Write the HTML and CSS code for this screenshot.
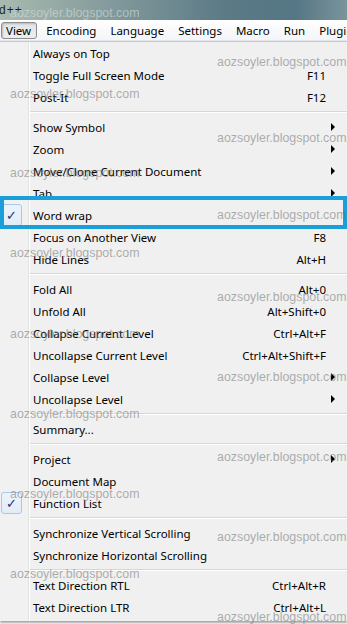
FILE: index.html
```html
<!DOCTYPE html>
<html lang="en">
<head>
  <meta charset="UTF-8">
  <meta name="viewport" content="width=device-width, initial-scale=1.0">
  <title>View menu</title>
  <link rel="stylesheet" href="styles.css">
</head>
<body>
  <div class="titlebar"><span class="appname">d++</span></div>

  <div class="menubar">
    <span class="mitem open">View</span>
    <span class="mitem">Encoding</span>
    <span class="mitem">Language</span>
    <span class="mitem">Settings</span>
    <span class="mitem">Macro</span>
    <span class="mitem">Run</span>
    <span class="mitem">Plugins</span>
  </div>

  <div class="menu">
    <div class="row"><span class="gut"></span><span class="lbl">Always on Top</span><span class="key"></span><span class="sub"></span></div>
    <div class="row"><span class="gut"></span><span class="lbl">Toggle Full Screen Mode</span><span class="key">F11</span><span class="sub"></span></div>
    <div class="row"><span class="gut"></span><span class="lbl">Post-It</span><span class="key">F12</span><span class="sub"></span></div>
    <div class="sep"></div>
    <div class="row"><span class="gut"></span><span class="lbl">Show Symbol</span><span class="key"></span><span class="sub"><i class="arrow"></i></span></div>
    <div class="row"><span class="gut"></span><span class="lbl">Zoom</span><span class="key"></span><span class="sub"><i class="arrow"></i></span></div>
    <div class="row"><span class="gut"></span><span class="lbl">Move/Clone Current Document</span><span class="key"></span><span class="sub"><i class="arrow"></i></span></div>
    <div class="row"><span class="gut"></span><span class="lbl">Tab</span><span class="key"></span><span class="sub"><i class="arrow"></i></span></div>
    <div class="row"><span class="gut"><b class="check">&#10003;</b></span><span class="lbl">Word wrap</span><span class="key"></span><span class="sub"></span></div>
    <div class="row"><span class="gut"></span><span class="lbl">Focus on Another View</span><span class="key">F8</span><span class="sub"></span></div>
    <div class="row"><span class="gut"></span><span class="lbl">Hide Lines</span><span class="key">Alt+H</span><span class="sub"></span></div>
    <div class="sep"></div>
    <div class="row"><span class="gut"></span><span class="lbl">Fold All</span><span class="key">Alt+0</span><span class="sub"></span></div>
    <div class="row"><span class="gut"></span><span class="lbl">Unfold All</span><span class="key">Alt+Shift+0</span><span class="sub"></span></div>
    <div class="row"><span class="gut"></span><span class="lbl">Collapse Current Level</span><span class="key">Ctrl+Alt+F</span><span class="sub"></span></div>
    <div class="row"><span class="gut"></span><span class="lbl">Uncollapse Current Level</span><span class="key">Ctrl+Alt+Shift+F</span><span class="sub"></span></div>
    <div class="row"><span class="gut"></span><span class="lbl">Collapse Level</span><span class="key"></span><span class="sub"><i class="arrow"></i></span></div>
    <div class="row"><span class="gut"></span><span class="lbl">Uncollapse Level</span><span class="key"></span><span class="sub"><i class="arrow"></i></span></div>
    <div class="sep"></div>
    <div class="row"><span class="gut"></span><span class="lbl">Summary...</span><span class="key"></span><span class="sub"></span></div>
    <div class="sep"></div>
    <div class="row"><span class="gut"></span><span class="lbl">Project</span><span class="key"></span><span class="sub"><i class="arrow"></i></span></div>
    <div class="row"><span class="gut"></span><span class="lbl">Document Map</span><span class="key"></span><span class="sub"></span></div>
    <div class="row"><span class="gut"><b class="check">&#10003;</b></span><span class="lbl">Function List</span><span class="key"></span><span class="sub"></span></div>
    <div class="sep"></div>
    <div class="row"><span class="gut"></span><span class="lbl">Synchronize Vertical Scrolling</span><span class="key"></span><span class="sub"></span></div>
    <div class="row"><span class="gut"></span><span class="lbl">Synchronize Horizontal Scrolling</span><span class="key"></span><span class="sub"></span></div>
    <div class="sep"></div>
    <div class="row"><span class="gut"></span><span class="lbl">Text Direction RTL</span><span class="key">Ctrl+Alt+R</span><span class="sub"></span></div>
    <div class="row"><span class="gut"></span><span class="lbl">Text Direction LTR</span><span class="key">Ctrl+Alt+L</span><span class="sub"></span></div>
  </div>

  <!-- annotation box drawn over the screenshot -->
  <div class="mark"></div>

  <!-- blog watermarks -->
  <span class="wm top" style="left:10px; top:6px">aozsoyler.blogspot.com</span>
  <span class="wm" style="left:217px; top:55px">aozsoyler.blogspot.com</span>
  <span class="wm" style="left:10px; top:87px">aozsoyler.blogspot.com</span>
  <span class="wm" style="left:217px; top:131px">aozsoyler.blogspot.com</span>
  <span class="wm" style="left:10px; top:166px">aozsoyler.blogspot.com</span>
  <span class="wm" style="left:217px; top:208px">aozsoyler.blogspot.com</span>
  <span class="wm" style="left:10px; top:246px">aozsoyler.blogspot.com</span>
  <span class="wm" style="left:217px; top:290px">aozsoyler.blogspot.com</span>
  <span class="wm" style="left:10px; top:327px">aozsoyler.blogspot.com</span>
  <span class="wm" style="left:217px; top:370px">aozsoyler.blogspot.com</span>
  <span class="wm" style="left:10px; top:407px">aozsoyler.blogspot.com</span>
  <span class="wm" style="left:217px; top:450px">aozsoyler.blogspot.com</span>
  <span class="wm" style="left:10px; top:487px">aozsoyler.blogspot.com</span>
  <span class="wm" style="left:217px; top:530px">aozsoyler.blogspot.com</span>
  <span class="wm" style="left:10px; top:567px">aozsoyler.blogspot.com</span>
  <span class="wm" style="left:217px; top:610px">aozsoyler.blogspot.com</span>
</body>
</html>
```

FILE: styles.css
```css
* {
  padding: 0;
  margin: 0;
  box-sizing: border-box;
}

body {
  width: 347px;
  height: 624px;
  overflow: hidden;
  position: relative;
  background: #ffffff;
  font-family: "Noto Sans", "Open Sans", sans-serif;
  font-size: 11.5px;
  color: #000;
}

.titlebar {
  height: 20px;
  background: linear-gradient(to right, #a9bbb0 0%, #7f979a 35%, #5b7a86 65%, #557684 85%, #7b949b 100%);
  display: flex;
  align-items: center;
}

.appname {
  font-family: "Liberation Sans", sans-serif;
  font-size: 12px;
  color: #1b2a20;
  margin-left: -1px;
  letter-spacing: 1px;
}

.menubar {
  height: 21px;
  display: flex;
  align-items: center;
  background: linear-gradient(#ffffff, #f3f5f8);
  border-bottom: 1px solid #e3e6ea;
  padding-left: 1px;
  white-space: nowrap;
}

.mitem {
  padding: 0 6px;
  line-height: 15px;
  border: 1px solid transparent;
}

.mitem.open {
  padding: 0 5px 0 4px;
  border: 1px solid #8d8d8d;
  border-radius: 3px;
  background: linear-gradient(#e2e5e8, #eceef0);
  box-shadow: inset 1px 1px 2px rgba(0, 0, 0, 0.2);
  margin-right: 2px;
}

.menu {
  border-top: 1px solid #c8c8c8;
  padding-top: 0;
  padding-bottom: 2px;
  background: linear-gradient(to right, #f1f1f1 0, #f1f1f1 28px, #e2e3e3 28px, #e2e3e3 29px, #ffffff 29px, #ffffff 30px, #f0f0f0 30px);
  box-shadow: 0 2px 2px rgba(0, 0, 0, 0.35);
  height: 580px;
}

.row {
  height: 22px;
  display: grid;
  grid-template-columns: 33px 1fr auto 21px;
  align-items: center;
  white-space: nowrap;
}

.gut {
  height: 22px;
  display: flex;
  align-items: center;
  padding-left: 1px;
}

.check {
  width: 21px;
  height: 22px;
  border: 1px solid #a8c8ec;
  border-radius: 3px;
  background: linear-gradient(#edf3fb, #e2ecf8);
  color: #20307a;
  font-family: "DejaVu Sans", sans-serif;
  font-weight: normal;
  font-size: 13px;
  display: flex;
  align-items: center;
  justify-content: center;
}

.key {
  text-align: right;
}

.sub {
  display: flex;
  align-items: center;
  padding-left: 5px;
}

.arrow {
  width: 0;
  height: 0;
  border-left: 4px solid #000;
  border-top: 4px solid transparent;
  border-bottom: 4px solid transparent;
}

.sep {
  height: 8px;
  margin-left: 30px;
  display: flex;
  flex-direction: column;
  justify-content: center;
}

.sep::before {
  content: "";
  display: block;
  height: 1px;
  background: #d7d7d7;
}

.sep::after {
  content: "";
  display: block;
  height: 1px;
  background: #ffffff;
}

.mark {
  position: absolute;
  left: 0;
  top: 196px;
  width: 347px;
  height: 33px;
  border: 4px solid #1a9fd9;
}

.wm {
  position: absolute;
  font-family: "Liberation Sans", Arial, sans-serif;
  font-size: 12.4px;
  line-height: 15px;
  color: rgba(110, 110, 110, 0.55);
  white-space: nowrap;
}

.wm.top {
  color: rgba(215, 222, 222, 0.6);
}
```
